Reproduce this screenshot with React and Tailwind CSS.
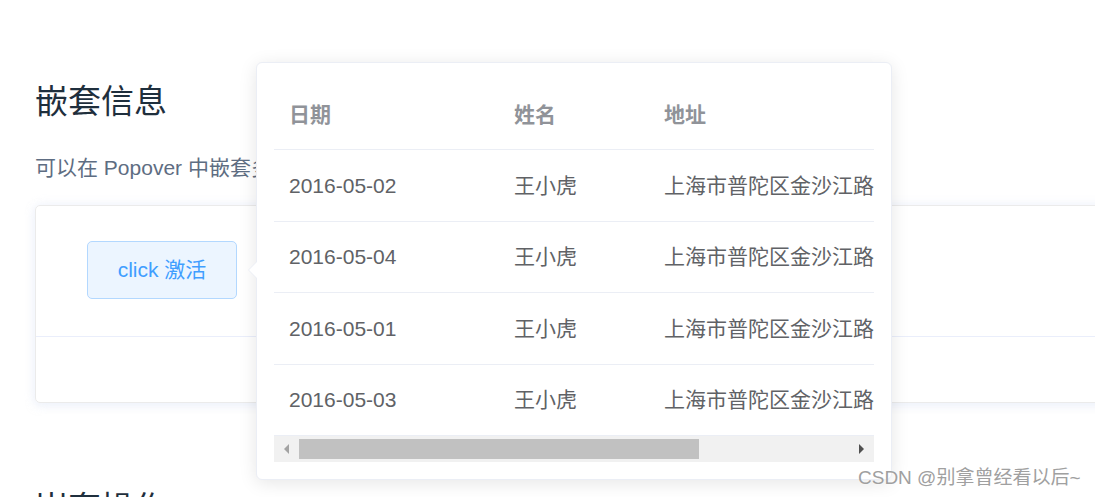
const rows = [
  { date: "2016-05-02", name: "王小虎", address: "上海市普陀区金沙江路 1518 弄" },
  { date: "2016-05-04", name: "王小虎", address: "上海市普陀区金沙江路 1518 弄" },
  { date: "2016-05-01", name: "王小虎", address: "上海市普陀区金沙江路 1518 弄" },
  { date: "2016-05-03", name: "王小虎", address: "上海市普陀区金沙江路 1518 弄" },
];

const font = "font-['Liberation_Sans','Noto_Sans_CJK_SC',sans-serif]";

export default function App() {
  return (
    <div className={`relative w-[1095px] h-[497px] overflow-hidden bg-white ${font}`}>
      {/* Page content */}
      <div className="pl-[35px] pt-[77px]">
        <h3 className="text-[33px] leading-[50px] text-[#1f2f3d] font-normal">嵌套信息</h3>
        <p className="mt-[25px] text-[21px] leading-[32px] text-[#5e6d82] whitespace-nowrap">
          可以在 Popover 中嵌套多种类型信息，以下为嵌套表格的例子。
        </p>

        <div className="mt-[21px] w-[1100px] border border-[#ebebeb] rounded-[5px] shadow-[0_0_12px_0_rgba(232,237,250,0.6),0_3px_8px_0_rgba(232,237,250,0.5)]">
          <div className="h-[130px] pl-[51px] pt-[35px]">
            <button className="h-[58px] w-[150px] rounded-[5px] border border-[#b3d8ff] bg-[#ecf5ff] text-[21px] text-[#409eff]">
              click 激活
            </button>
          </div>
          <div className="h-[66px] border-t border-[#eaeefb]"></div>
        </div>

        <h3 className="mt-[81px] text-[33px] leading-[50px] text-[#1f2f3d] font-normal">嵌套操作</h3>
      </div>

      {/* Popover */}
      <div className="absolute left-[256px] top-[62px] w-[636px] rounded-[6px] border border-[#ebeef5] bg-white p-[17px] shadow-[0_3px_18px_0_rgba(0,0,0,0.1)]">
        <div className="absolute left-[-9px] top-[198px] h-0 w-0 border-y-[9px] border-r-[9px] border-y-transparent border-r-[#ebeef5]"></div>
        <div className="absolute left-[-8px] top-[198px] h-0 w-0 border-y-[9px] border-r-[9px] border-y-transparent border-r-white"></div>

        <div className="w-[600px] overflow-hidden">
          <div className="w-[825px]">
            <div className="flex h-[70px] items-center border-b border-[#ebeef5] text-[21px] font-bold text-[#909399]">
              <div className="w-[225px] pl-[15px]">日期</div>
              <div className="w-[150px] pl-[15px]">姓名</div>
              <div className="w-[450px] pl-[15px]">地址</div>
            </div>
            {rows.map((row) => (
              <div
                key={row.date}
                className="flex h-[71.5px] items-center border-b border-[#ebeef5] text-[21px] text-[#606266]"
              >
                <div className="w-[225px] pl-[15px]">{row.date}</div>
                <div className="w-[150px] pl-[15px]">{row.name}</div>
                <div className="w-[450px] pl-[15px] whitespace-nowrap">{row.address}</div>
              </div>
            ))}
          </div>
        </div>

        {/* Horizontal scrollbar */}
        <div className="flex h-[26px] w-[600px] items-center bg-[#f1f1f1]">
          <div className="flex w-[25px] justify-center">
            <div className="h-0 w-0 border-y-[5px] border-r-[5px] border-y-transparent border-r-[#a3a3a3]"></div>
          </div>
          <div className="h-[20px] w-[400px] bg-[#c1c1c1]"></div>
          <div className="flex-1"></div>
          <div className="flex w-[25px] justify-center">
            <div className="h-0 w-0 border-y-[5px] border-l-[5px] border-y-transparent border-l-[#505050]"></div>
          </div>
        </div>
      </div>

      {/* Watermark */}
      <div className="absolute left-[858px] top-[465px] text-[19px] leading-[26px] text-[#a0a0a0] whitespace-nowrap [text-shadow:0_0_2px_#fff]">
        CSDN @别拿曾经看以后~
      </div>
    </div>
  );
}
